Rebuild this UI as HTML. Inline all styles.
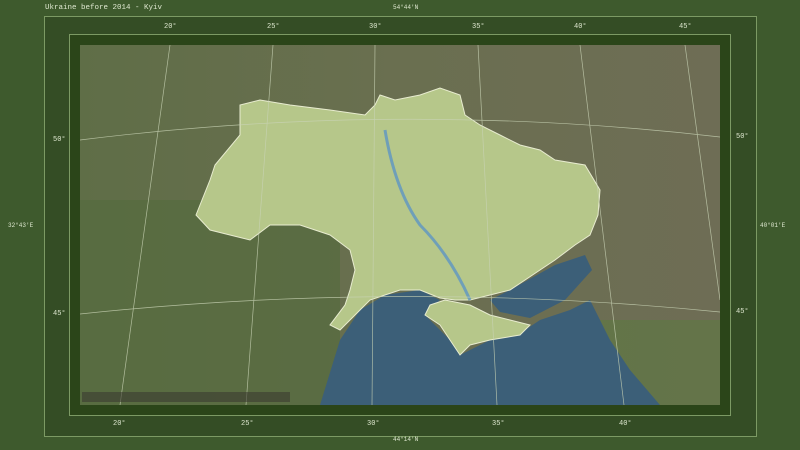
<!DOCTYPE html><html><head><style>
body{margin:0;width:800px;height:450px;overflow:hidden;background:#3e5a2d;font-family:"Liberation Mono",monospace;}
.t{position:absolute;color:#dfe8d0;font-size:7px;white-space:nowrap;}
</style></head><body>
<div style="position:absolute;left:44px;top:16px;width:711px;height:419px;border:1px solid #7c9a64;background:#344d25"></div>
<div style="position:absolute;left:69px;top:34px;width:660px;height:380px;border:1px solid #7c9a64;background:#2b4519"></div>
<svg style="position:absolute;left:80px;top:45px" width="640" height="360" viewBox="80 45 640 360">
<defs><linearGradient id="g" x1="0" y1="0" x2="1" y2="0"><stop offset="0" stop-color="#5f6e47"/><stop offset=".5" stop-color="#6a6f50"/><stop offset="1" stop-color="#6e6d55"/></linearGradient></defs>
<rect x="80" y="45" width="640" height="360" fill="url(#g)"/>
<rect x="80" y="200" width="260" height="205" fill="#566b3e" opacity=".7"/>
<rect x="560" y="320" width="160" height="85" fill="#5f7744" opacity=".7"/>
<path d="M320,405 L340,340 360,310 385,295 420,290 440,300 425,315 450,340 460,355 490,340 525,330 540,320 570,310 590,300 610,340 630,370 660,405Z" fill="#3c5f78"/>
<path d="M490,300 510,290 555,265 585,255 592,270 565,300 530,318 500,312Z" fill="#3c5f78"/>
<path d="M196,215 210,180 215,165 240,135 240,105 260,100 290,105 330,110 365,115 375,105 380,95 395,100 420,95 440,88 460,95 465,115 480,125 500,135 520,145 540,150 555,160 585,165 600,190 598,215 590,235 575,245 555,260 540,270 510,290 490,295 470,300 455,300 440,298 420,290 400,290 385,295 370,300 360,310 350,320 340,330 330,325 345,305 350,290 355,270 350,250 330,235 300,225 270,225 250,240 230,235 210,230Z" fill="#b6c78a" stroke="#e8ecd0" stroke-width="1"/>
<path d="M430,305 445,300 470,305 490,315 510,320 530,325 520,335 490,340 470,345 460,355 450,340 440,325 425,315Z" fill="#b6c78a" stroke="#e8ecd0" stroke-width="1"/>
<path d="M385,130 Q395,190 420,225 Q450,255 470,300" stroke="#6f9fb8" stroke-width="3" fill="none"/>
<g stroke="#c9d3b5" stroke-width=".7" fill="none" opacity=".8">
<path d="M170,45 L120,405 M273,45 L246,405 M375,45 L372,405 M478,45 L497,405 M580,45 L624,405 M685,45 L720,300"/>
<path d="M80,140 Q400,100 720,137 M80,314 Q400,280 720,312"/>
</g>
<rect x="82" y="392" width="208" height="10" fill="#3a3a30" opacity=".6"/>
</svg>
<div class="t" style="left:45px;top:4px;font-size:7.5px">Ukraine before 2014 - Kyiv</div>
<div class="t" style="left:393px;top:4px;font-size:6px">54°44'N</div>
<div class="t" style="left:393px;top:436px;font-size:6px">44°14'N</div>
<div class="t" style="left:8px;top:222px;font-size:6px">32°43'E</div>
<div class="t" style="left:760px;top:222px;font-size:6px">40°01'E</div>
<div class="t" style="left:164px;top:23px">20°</div>
<div class="t" style="left:267px;top:23px">25°</div>
<div class="t" style="left:369px;top:23px">30°</div>
<div class="t" style="left:472px;top:23px">35°</div>
<div class="t" style="left:574px;top:23px">40°</div>
<div class="t" style="left:679px;top:23px">45°</div>
<div class="t" style="left:113px;top:420px">20°</div>
<div class="t" style="left:241px;top:420px">25°</div>
<div class="t" style="left:367px;top:420px">30°</div>
<div class="t" style="left:492px;top:420px">35°</div>
<div class="t" style="left:619px;top:420px">40°</div>
<div class="t" style="left:53px;top:136px">50°</div>
<div class="t" style="left:53px;top:310px">45°</div>
<div class="t" style="left:736px;top:133px">50°</div>
<div class="t" style="left:736px;top:308px">45°</div>
</body></html>
